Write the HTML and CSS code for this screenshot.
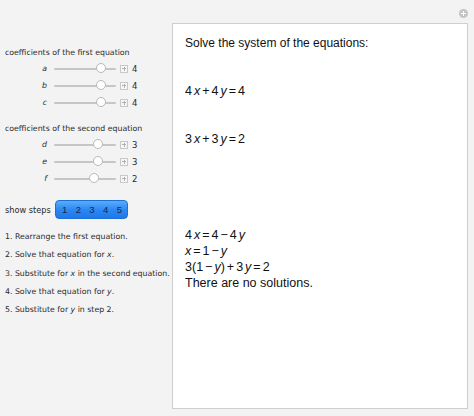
FILE: index.html
```html
<!DOCTYPE html>
<html>
<head>
<meta charset="utf-8">
<link rel="stylesheet" href="styles.css">
</head>
<body>
<div class="app">
  <div class="controls">
    <div class="group">
      <div class="heading">coefficients of the first equation</div>
      <div class="row"><span class="lbl">a</span><span class="slider"><span class="thumb" style="left:47px"></span></span><span class="pbox"></span><span class="val">4</span></div>
      <div class="row"><span class="lbl">b</span><span class="slider"><span class="thumb" style="left:47px"></span></span><span class="pbox"></span><span class="val">4</span></div>
      <div class="row"><span class="lbl">c</span><span class="slider"><span class="thumb" style="left:47px"></span></span><span class="pbox"></span><span class="val">4</span></div>
    </div>
    <div class="group second">
      <div class="heading">coefficients of the second equation</div>
      <div class="row"><span class="lbl">d</span><span class="slider"><span class="thumb" style="left:44px"></span></span><span class="pbox"></span><span class="val">3</span></div>
      <div class="row"><span class="lbl">e</span><span class="slider"><span class="thumb" style="left:44px"></span></span><span class="pbox"></span><span class="val">3</span></div>
      <div class="row"><span class="lbl">f</span><span class="slider"><span class="thumb" style="left:40px"></span></span><span class="pbox"></span><span class="val">2</span></div>
    </div>
    <div class="steps-ctl">
      <span class="steps-lbl">show steps</span>
      <div class="btns"><span>1</span><span>2</span><span>3</span><span>4</span><span>5</span></div>
    </div>
    <ol class="steps">
      <li>1. Rearrange the first equation.</li>
      <li>2. Solve that equation for <i>x</i>.</li>
      <li>3. Substitute for <i>x</i> in the second equation.</li>
      <li>4. Solve that equation for <i>y</i>.</li>
      <li>5. Substitute for <i>y</i> in step 2.</li>
    </ol>
  </div>
  <div class="panel">
    <div class="title">Solve the system of the equations:</div>
    <div class="eq eq1">4<i class="v">x</i><span class="op">+</span>4<i class="v">y</i><span class="op">=</span>4</div>
    <div class="eq eq2">3<i class="v">x</i><span class="op">+</span>3<i class="v">y</i><span class="op">=</span>2</div>
    <div class="solution">
      <div class="eq">4<i class="v">x</i><span class="op">=</span>4<span class="op">−</span>4<i class="v">y</i></div>
      <div class="eq"><i class="v0">x</i><span class="op">=</span>1<span class="op">−</span><i class="v0">y</i></div>
      <div class="eq">3<span class="p">(</span>1<span class="op">−</span><i class="v0">y</i>)<span class="op">+</span>3<i class="v">y</i><span class="op">=</span>2</div>
      <div class="txt">There are no solutions.</div>
    </div>
  </div>
  <span class="plus-icon"></span>
</div>
</body>
</html>
```
FILE: styles.css
```css
html, body {
  margin: 0;
  padding: 0;
}
body {
  background: #f3f3f3;
  width: 474px;
  height: 416px;
  overflow: hidden;
  font-family: "Liberation Sans", Arial, sans-serif;
}
.app {
  position: relative;
  display: flex;
  width: 474px;
  height: 416px;
}
.controls {
  width: 172px;
  flex: none;
  padding-top: 48px;
  box-sizing: border-box;
  font-family: "DejaVu Sans", "Liberation Sans", sans-serif;
  font-size: 7.8px;
  color: #2a2a2a;
  white-space: nowrap;
}
.heading {
  padding-left: 5px;
  height: 10px;
  line-height: 10px;
}
.row {
  display: flex;
  align-items: center;
  height: 17px;
}
.group .heading + .row {
  margin-top: 2px;
}
.lbl {
  width: 47px;
  text-align: right;
  font-style: italic;
}
.slider {
  position: relative;
  margin-left: 7px;
  width: 62px;
  height: 2px;
  background: #c6c6c6;
  border-radius: 1px;
}
.thumb {
  position: absolute;
  top: -5px;
  width: 10px;
  height: 10px;
  margin-left: -5px;
  box-sizing: border-box;
  border: 1px solid #b8b8b8;
  border-radius: 50%;
  background: #fff;
}
.pbox {
  position: relative;
  margin-left: 4px;
  width: 6px;
  height: 6px;
  border: 1px solid #c8c8c8;
  background: #f6f6f6;
}
.pbox::before, .pbox::after {
  content: "";
  position: absolute;
  background: #b0b0b0;
}
.pbox::before { left: 1px; top: 2.5px; width: 4px; height: 1px; }
.pbox::after { left: 2.5px; top: 1px; width: 1px; height: 4px; }
.val {
  margin-left: 4px;
  font-size: 8.5px;
}
.second {
  margin-top: 13px;
}
.steps-ctl {
  display: flex;
  align-items: center;
  margin-top: 13px;
  padding-left: 5px;
  height: 19px;
}
.steps-lbl {
  width: 50px;
  font-size: 8.2px;
}
.btns {
  display: flex;
  width: 73px;
  height: 19px;
  box-sizing: border-box;
  border: 1px solid #1c6fd6;
  border-radius: 4px;
  background: linear-gradient(#58adfa, #2a86f2 55%, #1f78ea);
  justify-content: space-between;
  align-items: center;
  padding: 0 5px 0 6px;
  font-family: "Liberation Sans", Arial, sans-serif;
  font-size: 9.5px;
  color: #14264a;
}
.steps {
  list-style: none;
  margin: 13px 0 0 0;
  padding: 0 0 0 5px;
}
.steps li {
  height: 18.3px;
  line-height: 10px;
}
.panel {
  margin-top: 23px;
  width: 296px;
  height: 386px;
  box-sizing: border-box;
  background: #fff;
  border: 1px solid #cfcfcf;
  padding: 12px 0 0 12px;
  font-size: 12px;
  color: #111;
}
.title {
  line-height: 14px;
}
.eq {
  font-size: 12.5px;
  line-height: 16px;
  height: 16px;
  white-space: nowrap;
}
.eq1 { margin-top: 33px; }
.eq2 { margin-top: 32px; }
.v { margin-left: 2px; }
.v0 { margin-left: 0; }
.op {
  display: inline-block;
  margin: 0 2px;
}
.solution {
  margin-top: 80px;
}
.txt {
  font-size: 12.5px;
  line-height: 16px;
}
.plus-icon {
  position: absolute;
  left: 459px;
  top: 9px;
  width: 9px;
  height: 9px;
  border-radius: 50%;
  background: #c4c4c4;
}
.plus-icon::before, .plus-icon::after {
  content: "";
  position: absolute;
  background: #fff;
}
.plus-icon::before { left: 2px; top: 4px; width: 5px; height: 1px; }
.plus-icon::after { left: 4px; top: 2px; width: 1px; height: 5px; }
```
